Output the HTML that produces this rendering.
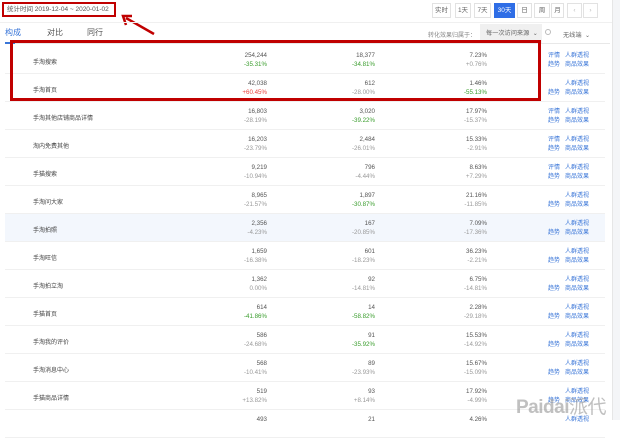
<!DOCTYPE html>
<html><head><meta charset="utf-8"><style>
*{margin:0;padding:0;box-sizing:border-box}
body{width:620px;height:420px;overflow:hidden;background:#fff;font-family:"Liberation Sans","Noto Sans CJK SC",sans-serif;color:#555;position:relative}
.abs{position:absolute}
.btn{position:absolute;top:3px;height:15px;border:1px solid #e2e2e2;font-size:6.5px;line-height:13px;text-align:center;color:#666;background:#fff}
.row{position:absolute;left:5px;width:600px;height:28px;border-bottom:1px solid #f0f0f0;font-size:6.2px}
.nm{position:absolute;left:28px;top:11px;color:#444;font-size:6px}
.c{position:absolute;width:90px;text-align:right;line-height:8px}
.c1{left:172px}.c2{left:280px}.c3{left:392px}
.c div:first-child{margin-top:6px;color:#555}
.c div+div{margin-top:1px;color:#999}
.g{color:#3a9d2d!important}.r{color:#e8433d!important}
.lk{position:absolute;color:#3a76d8;line-height:8px;font-size:6px}
.l1{left:543px;top:6px}.l2{left:560px;top:6px}.l3{left:543px;top:15px}.l4{left:560px;top:15px}
</style></head><body>
<div class="abs" style="left:612px;top:0;width:8px;height:420px;background:#f4f5f7;border-left:1px solid #e6e6e6"></div>
<div class="abs" style="left:2px;top:2px;width:114px;height:15px;border:2px solid #c00000;font-size:6.5px;line-height:11px;padding-left:3px;color:#555;white-space:nowrap;overflow:hidden">统计时间 2019-12-04 ~ 2020-01-02</div>
<svg class="abs" style="left:118px;top:12px" width="42" height="26"><line x1="36" y1="22" x2="8" y2="6" stroke="#c00000" stroke-width="2.5"/><polyline points="8,13 5,4 14,4" fill="none" stroke="#c00000" stroke-width="2.5"/></svg>
<div class="btn" style="left:432px;width:19px">实时</div>
<div class="btn" style="left:455px;width:16px">1天</div>
<div class="btn" style="left:474px;width:17px">7天</div>
<div class="btn" style="left:494px;width:21px;background:#2f6ee6;border-color:#2f6ee6;color:#fff">30天</div>
<div class="btn" style="left:517px;width:15px">日</div>
<div class="btn" style="left:534px;width:16px">周</div>
<div class="btn" style="left:551px;width:13px">月</div>
<div class="btn" style="left:567px;width:15px;color:#bbb">‹</div>
<div class="btn" style="left:583px;width:15px;color:#bbb">›</div>
<div class="abs" style="left:0;top:22px;width:612px;border-top:1px solid #f0f0f0"></div>
<div class="abs" style="left:5px;top:27px;font-size:8px;color:#3a76d8">构成</div>
<div class="abs" style="left:47px;top:27px;font-size:8px;color:#555">对比</div>
<div class="abs" style="left:87px;top:27px;font-size:8px;color:#555">同行</div>
<div class="abs" style="left:5px;top:43px;width:605px;border-top:1px solid #e8e8e8"></div>
<div class="abs" style="left:5px;top:42px;width:10px;border-top:2px solid #3a76d8"></div>
<div class="abs" style="left:428px;top:30px;font-size:6px;color:#888">转化效果归属于：</div>
<div class="abs" style="left:480px;top:24px;width:62px;height:19px;background:#f0f0f0;font-size:6.2px;line-height:19px;padding-left:6px;color:#666">每一次访问来源 &nbsp;⌄</div>
<div class="abs" style="left:545px;top:29px;width:6px;height:6px;border:1px solid #bbb;border-radius:50%"></div>
<div class="abs" style="left:563px;top:30px;font-size:6.2px;color:#666">无线端 &nbsp;⌄</div>

<div class="row" style="top:46px"><span class="nm">手淘搜索</span><div class="c c1"><div>254,244</div><div class="g">-35.31%</div></div><div class="c c2"><div>18,377</div><div class="g">-34.81%</div></div><div class="c c3"><div>7.23%</div><div>+0.76%</div></div><span class="lk l1">评情</span><span class="lk l2">人群透视</span><span class="lk l3">趋势</span><span class="lk l4">商品效果</span></div>
<div class="row" style="top:74px"><span class="nm">手淘首页</span><div class="c c1"><div>42,038</div><div class="r">+60.45%</div></div><div class="c c2"><div>612</div><div>-28.00%</div></div><div class="c c3"><div>1.46%</div><div class="g">-55.13%</div></div><span class="lk l2">人群透视</span><span class="lk l3">趋势</span><span class="lk l4">商品效果</span></div>
<div class="row" style="top:102px"><span class="nm">手淘其他店铺商品详情</span><div class="c c1"><div>16,803</div><div>-28.19%</div></div><div class="c c2"><div>3,020</div><div class="g">-39.22%</div></div><div class="c c3"><div>17.97%</div><div>-15.37%</div></div><span class="lk l1">评情</span><span class="lk l2">人群透视</span><span class="lk l3">趋势</span><span class="lk l4">商品效果</span></div>
<div class="row" style="top:130px"><span class="nm">淘内免费其他</span><div class="c c1"><div>16,203</div><div>-23.79%</div></div><div class="c c2"><div>2,484</div><div>-26.01%</div></div><div class="c c3"><div>15.33%</div><div>-2.91%</div></div><span class="lk l1">评情</span><span class="lk l2">人群透视</span><span class="lk l3">趋势</span><span class="lk l4">商品效果</span></div>
<div class="row" style="top:158px"><span class="nm">手猫搜索</span><div class="c c1"><div>9,219</div><div>-10.94%</div></div><div class="c c2"><div>796</div><div>-4.44%</div></div><div class="c c3"><div>8.63%</div><div>+7.29%</div></div><span class="lk l1">评情</span><span class="lk l2">人群透视</span><span class="lk l3">趋势</span><span class="lk l4">商品效果</span></div>
<div class="row" style="top:186px"><span class="nm">手淘问大家</span><div class="c c1"><div>8,965</div><div>-21.57%</div></div><div class="c c2"><div>1,897</div><div class="g">-30.87%</div></div><div class="c c3"><div>21.16%</div><div>-11.85%</div></div><span class="lk l2">人群透视</span><span class="lk l3">趋势</span><span class="lk l4">商品效果</span></div>
<div class="row" style="top:214px;background:#f3f7fd"><span class="nm">手淘拍照</span><div class="c c1"><div>2,356</div><div>-4.23%</div></div><div class="c c2"><div>167</div><div>-20.85%</div></div><div class="c c3"><div>7.09%</div><div>-17.36%</div></div><span class="lk l2">人群透视</span><span class="lk l3">趋势</span><span class="lk l4">商品效果</span></div>
<div class="row" style="top:242px"><span class="nm">手淘旺信</span><div class="c c1"><div>1,659</div><div>-16.38%</div></div><div class="c c2"><div>601</div><div>-18.23%</div></div><div class="c c3"><div>36.23%</div><div>-2.21%</div></div><span class="lk l2">人群透视</span><span class="lk l3">趋势</span><span class="lk l4">商品效果</span></div>
<div class="row" style="top:270px"><span class="nm">手淘拍立淘</span><div class="c c1"><div>1,362</div><div>0.00%</div></div><div class="c c2"><div>92</div><div>-14.81%</div></div><div class="c c3"><div>6.75%</div><div>-14.81%</div></div><span class="lk l2">人群透视</span><span class="lk l3">趋势</span><span class="lk l4">商品效果</span></div>
<div class="row" style="top:298px"><span class="nm">手猫首页</span><div class="c c1"><div>614</div><div class="g">-41.86%</div></div><div class="c c2"><div>14</div><div class="g">-58.82%</div></div><div class="c c3"><div>2.28%</div><div>-29.18%</div></div><span class="lk l2">人群透视</span><span class="lk l3">趋势</span><span class="lk l4">商品效果</span></div>
<div class="row" style="top:326px"><span class="nm">手淘我的评价</span><div class="c c1"><div>586</div><div>-24.68%</div></div><div class="c c2"><div>91</div><div class="g">-35.92%</div></div><div class="c c3"><div>15.53%</div><div>-14.92%</div></div><span class="lk l2">人群透视</span><span class="lk l3">趋势</span><span class="lk l4">商品效果</span></div>
<div class="row" style="top:354px"><span class="nm">手淘消息中心</span><div class="c c1"><div>568</div><div>-10.41%</div></div><div class="c c2"><div>89</div><div>-23.93%</div></div><div class="c c3"><div>15.67%</div><div>-15.09%</div></div><span class="lk l2">人群透视</span><span class="lk l3">趋势</span><span class="lk l4">商品效果</span></div>
<div class="row" style="top:382px"><span class="nm">手猫商品详情</span><div class="c c1"><div>519</div><div>+13.82%</div></div><div class="c c2"><div>93</div><div>+8.14%</div></div><div class="c c3"><div>17.92%</div><div>-4.99%</div></div><span class="lk l2">人群透视</span><span class="lk l3">趋势</span><span class="lk l4">商品效果</span></div>
<div class="row" style="top:410px"><div class="c c1"><div>493</div></div><div class="c c2"><div>21</div></div><div class="c c3"><div>4.26%</div></div><span class="lk l2">人群透视</span></div>

<div class="abs" style="left:10px;top:40px;width:531px;height:61px;border:3px solid #c00000"></div>
<div class="abs" style="left:516px;top:392px;font-size:19px;font-weight:bold;color:rgba(150,150,150,0.6);letter-spacing:-0.5px">Paidai<span style="font-weight:normal">派代</span></div>
</body></html>
